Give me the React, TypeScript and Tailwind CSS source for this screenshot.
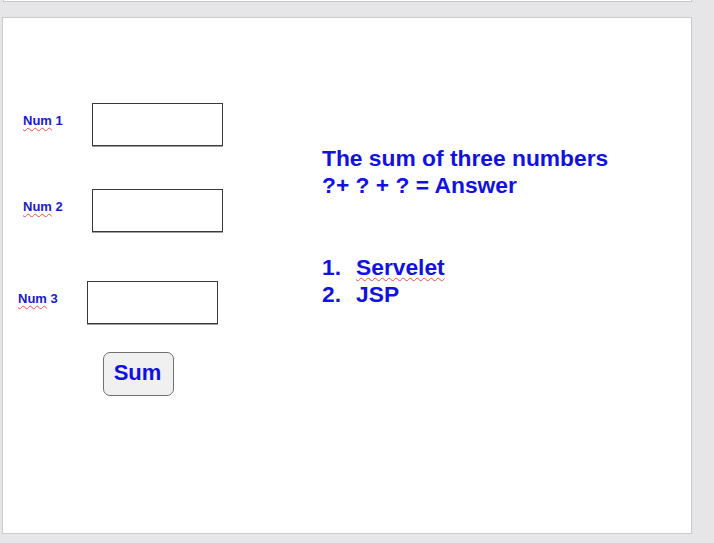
import React from "react";

const font = { fontFamily: '"Liberation Sans", Arial, sans-serif' };

function Label({ n, ml }: { n: string; ml: string }) {
  return (
    <span className={`${ml} w-[69px] shrink-0 pb-[8px] text-[13px] font-bold text-[#1a1ac8]`}>
      <span className="underline decoration-wavy decoration-[#e05050] decoration-1 underline-offset-[2px]">Num</span> {n}
    </span>
  );
}

function Box() {
  return <input className="w-[131px] h-[43px] border border-[#3a3a3a] bg-white shadow-[0_1px_0_#a0a0a0] outline-none" />;
}

export default function App() {
  return (
    <div className="w-[714px] h-[543px] bg-[#e6e6e9] overflow-hidden" style={font}>
      <div className="ml-[3px] w-[689px] h-[2px] bg-white border-b border-x border-[#c8c8c8]" />
      <div className="mt-[15px] ml-[2px] w-[690px] h-[517px] bg-white border border-[#cbcbcb] flex">
        <div className="w-[319px] shrink-0 flex flex-col">
          <div className="flex items-center mt-[85px]">
            <Label n="1" ml="ml-[20px]" />
            <Box />
          </div>
          <div className="flex items-center mt-[43px]">
            <Label n="2" ml="ml-[20px]" />
            <Box />
          </div>
          <div className="flex items-center mt-[49px]">
            <Label n="3" ml="ml-[15px]" />
            <Box />
          </div>
          <button className="mt-[28px] ml-[100px] w-[71px] h-[44px] pb-[3px] pr-[2px] bg-[#f0f0f0] border border-[#707070] rounded-[7px] text-[22px] font-bold text-[#1010e0] leading-none">
            Sum
          </button>
        </div>
        <div className="pt-[127px] text-[22.8px] leading-[27px] font-bold text-[#1212dc]">
          <div>The sum of three numbers</div>
          <div>?+ ? + ? = Answer</div>
          <ol className="mt-[55px]">
            <li className="flex">
              <span className="w-[34px]">1.</span>
              <span className="underline decoration-wavy decoration-[#e05050] decoration-1 underline-offset-[2px]">Servelet</span>
            </li>
            <li className="flex">
              <span className="w-[34px]">2.</span>
              <span>JSP</span>
            </li>
          </ol>
        </div>
      </div>
    </div>
  );
}
